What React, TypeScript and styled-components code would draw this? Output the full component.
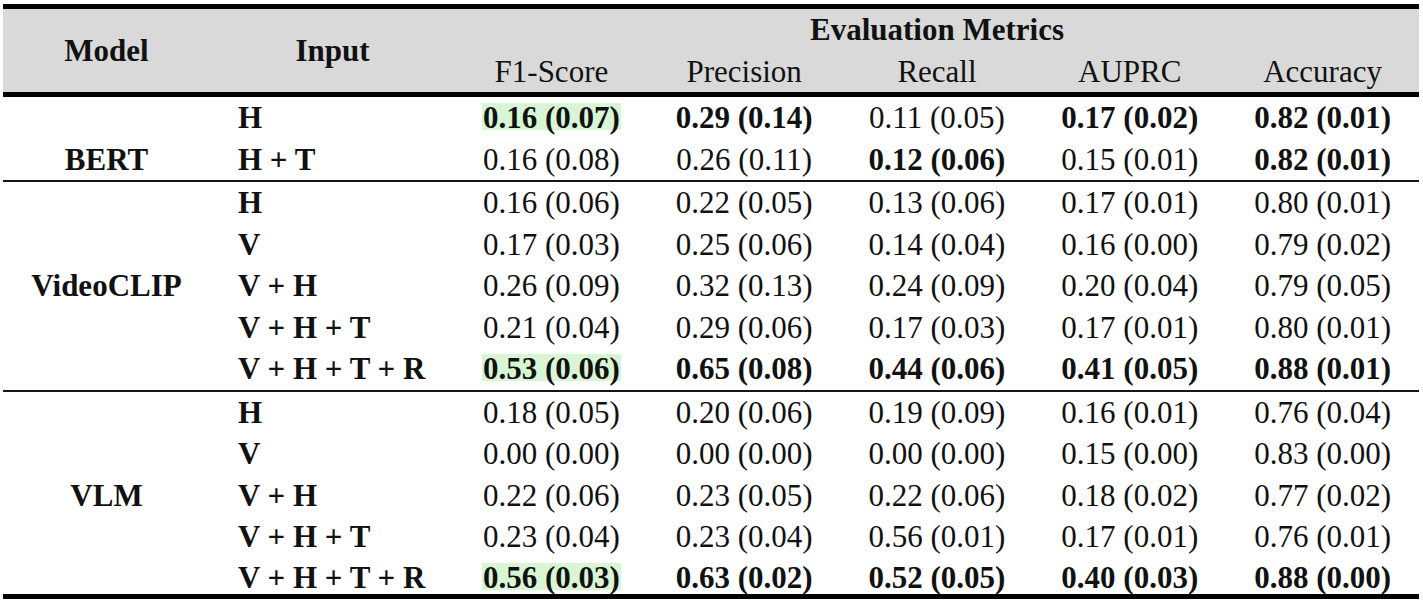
import styled, { createGlobalStyle } from "styled-components"

const GlobalStyle = createGlobalStyle`
  html, body {
    margin: 0;
    padding: 0;
    background: #ffffff;
  }
  body {
    font-family: "Liberation Serif", "Times New Roman", serif;
    color: #111;
  }
`

const COLS = "207px 245px repeat(5, 1fr)"

const Table = styled.div`
  width: 1416px;
  margin: 4px 0 0 3px;
  border-top: 5px solid #000;
  border-bottom: 5px solid #000;
  font-size: 31px;
`

const Head = styled.div`
  display: grid;
  grid-template-columns: ${COLS};
  grid-template-rows: 41.5px 41.5px;
  background: #d9d9d9;
  border-bottom: 5px solid #000;
`

const HeadCell = styled.div<{ span?: number; rows?: number; bold?: boolean }>`
  display: flex;
  align-items: center;
  justify-content: center;
  grid-column: span ${(p) => p.span ?? 1};
  grid-row: span ${(p) => p.rows ?? 1};
  font-weight: ${(p) => (p.bold ? 700 : 400)};
  line-height: 1;
`

const Group = styled.div<{ last?: boolean }>`
  display: flex;
  flex-direction: column;
  border-bottom: ${(p) => (p.last ? "none" : "2px solid #161616")};
`

// the closing row of the table sits a little tighter against the bottom rule
const Row = styled.div<{ closing?: boolean }>`
  box-sizing: border-box;
  display: grid;
  grid-template-columns: ${COLS};
  height: ${(p) => (p.closing ? 36 : 41.5)}px;
  padding-top: ${(p) => (p.closing ? 4 : 0)}px;
  align-items: center;
`

const ModelCell = styled.div`
  text-align: center;
  font-weight: 700;
  line-height: 1;
`

const InputCell = styled.div`
  padding-left: 28px;
  font-weight: 700;
  line-height: 1;
  white-space: pre;
`

const MetricCell = styled.div`
  text-align: center;
  line-height: 1;
`

const Val = styled.span<{ bold?: boolean; hl?: boolean }>`
  display: inline-block;
  font-weight: ${(p) => (p.bold ? 700 : 400)};
  background: ${(p) => (p.hl ? "#d8f6d4" : "transparent")};
  height: 27px;
  line-height: 29px;
  padding: 0 1px;
`

type Cell = { v: string; b?: boolean; hl?: boolean }
type Line = { model?: string; input: string; cells: Cell[] }

const n = (v: string): Cell => ({ v })
const b = (v: string, hl = false): Cell => ({ v, b: true, hl })

const groups: Line[][] = [
  [
    { input: "H", cells: [b("0.16 (0.07)", true), b("0.29 (0.14)"), n("0.11 (0.05)"), b("0.17 (0.02)"), b("0.82 (0.01)")] },
    { model: "BERT", input: "H + T", cells: [n("0.16 (0.08)"), n("0.26 (0.11)"), b("0.12 (0.06)"), n("0.15 (0.01)"), b("0.82 (0.01)")] },
  ],
  [
    { input: "H", cells: [n("0.16 (0.06)"), n("0.22 (0.05)"), n("0.13 (0.06)"), n("0.17 (0.01)"), n("0.80 (0.01)")] },
    { input: "V", cells: [n("0.17 (0.03)"), n("0.25 (0.06)"), n("0.14 (0.04)"), n("0.16 (0.00)"), n("0.79 (0.02)")] },
    { model: "VideoCLIP", input: "V + H", cells: [n("0.26 (0.09)"), n("0.32 (0.13)"), n("0.24 (0.09)"), n("0.20 (0.04)"), n("0.79 (0.05)")] },
    { input: "V + H + T", cells: [n("0.21 (0.04)"), n("0.29 (0.06)"), n("0.17 (0.03)"), n("0.17 (0.01)"), n("0.80 (0.01)")] },
    { input: "V + H + T + R", cells: [b("0.53 (0.06)", true), b("0.65 (0.08)"), b("0.44 (0.06)"), b("0.41 (0.05)"), b("0.88 (0.01)")] },
  ],
  [
    { input: "H", cells: [n("0.18 (0.05)"), n("0.20 (0.06)"), n("0.19 (0.09)"), n("0.16 (0.01)"), n("0.76 (0.04)")] },
    { input: "V", cells: [n("0.00 (0.00)"), n("0.00 (0.00)"), n("0.00 (0.00)"), n("0.15 (0.00)"), n("0.83 (0.00)")] },
    { model: "VLM", input: "V + H", cells: [n("0.22 (0.06)"), n("0.23 (0.05)"), n("0.22 (0.06)"), n("0.18 (0.02)"), n("0.77 (0.02)")] },
    { input: "V + H + T", cells: [n("0.23 (0.04)"), n("0.23 (0.04)"), n("0.56 (0.01)"), n("0.17 (0.01)"), n("0.76 (0.01)")] },
    { input: "V + H + T + R", cells: [b("0.56 (0.03)", true), b("0.63 (0.02)"), b("0.52 (0.05)"), b("0.40 (0.03)"), b("0.88 (0.00)")] },
  ],
]

const metrics = ["F1-Score", "Precision", "Recall", "AUPRC", "Accuracy"]

const App = () => {
  return (
    <>
      <GlobalStyle />
      <Table>
        <Head>
          <HeadCell rows={2} bold>
            Model
          </HeadCell>
          <HeadCell rows={2} bold>
            Input
          </HeadCell>
          <HeadCell span={5} bold>
            Evaluation Metrics
          </HeadCell>
          {metrics.map((m) => (
            <HeadCell key={m}>{m}</HeadCell>
          ))}
        </Head>
        {groups.map((lines, gi) => {
          const lastGroup = gi === groups.length - 1
          return (
            <Group key={gi} last={lastGroup}>
              {lines.map((line, li) => (
                <Row key={li} closing={lastGroup && li === lines.length - 1}>
                  <ModelCell>{line.model ?? ""}</ModelCell>
                  <InputCell>{line.input}</InputCell>
                  {line.cells.map((c, ci) => (
                    <MetricCell key={ci}>
                      <Val bold={c.b} hl={c.hl}>
                        {c.v}
                      </Val>
                    </MetricCell>
                  ))}
                </Row>
              ))}
            </Group>
          )
        })}
      </Table>
    </>
  )
}

export default App
